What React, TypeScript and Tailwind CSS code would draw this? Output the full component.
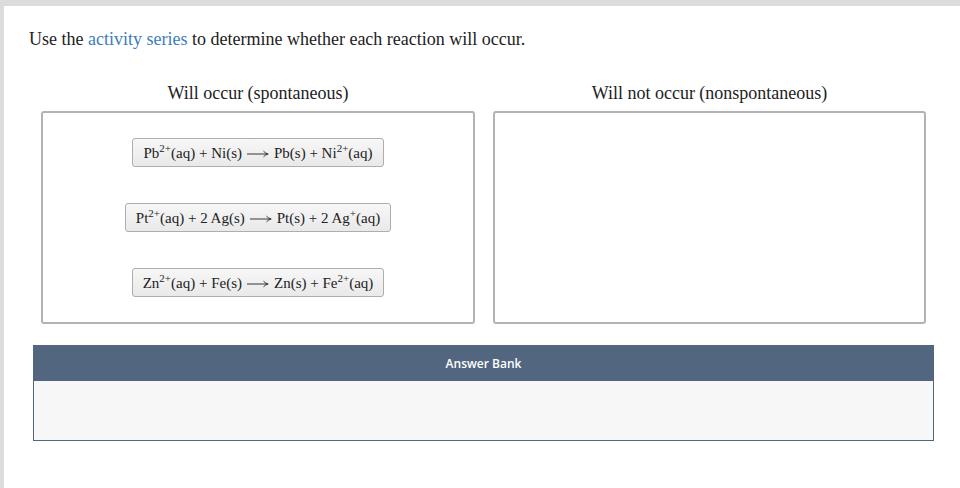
import React from "react";

const serif = "font-['Liberation_Serif','Times_New_Roman',serif]";

function Arrow() {
  return (
    <svg width="22" height="8" viewBox="0 0 22 8" className="mx-[5px] inline-block align-middle">
      <line x1="0" y1="4" x2="20" y2="4" stroke="#222" strokeWidth="0.9" />
      <path d="M16.5 1.2 Q18.5 3.4 21.2 4 Q18.5 4.6 16.5 6.8" fill="none" stroke="#222" strokeWidth="0.9" />
    </svg>
  );
}

function Sup({ children }: { children: React.ReactNode }) {
  return <sup className="top-[-5px] text-[11px] leading-none">{children}</sup>;
}

function Chip({ children }: { children: React.ReactNode }) {
  return (
    <div
      className={`flex h-[29px] items-center whitespace-nowrap rounded-[3px] border border-[#aeaeae] bg-gradient-to-b from-[#f7f7f7] to-[#e9e9e9] px-[10px] pt-[2px] text-[15px] text-[#222] ${serif}`}
    >
      {children}
    </div>
  );
}

const reactions = [
  {
    key: "pb",
    body: (
      <>
        Pb<Sup>2+</Sup>(aq) + Ni(s)
        <Arrow />
        Pb(s) + Ni<Sup>2+</Sup>(aq)
      </>
    ),
  },
  {
    key: "pt",
    body: (
      <>
        Pt<Sup>2+</Sup>(aq) + 2 Ag(s)
        <Arrow />
        Pt(s) + 2 Ag<Sup>+</Sup>(aq)
      </>
    ),
  },
  {
    key: "zn",
    body: (
      <>
        Zn<Sup>2+</Sup>(aq) + Fe(s)
        <Arrow />
        Zn(s) + Fe<Sup>2+</Sup>(aq)
      </>
    ),
  },
];

export default function App() {
  return (
    <div className="h-[488px] w-[960px] overflow-hidden bg-[#dcdcdc] pl-[4px] pt-[6px]">
      <div className="h-full w-full bg-white pl-[25px] pt-[21px]">
        <p className={`text-[18px] leading-[24px] text-[#222] ${serif}`}>
          Use the <span className="text-[#3b7dc1]">activity series</span> to determine whether each reaction will occur.
        </p>

        <div className="mt-[30px] flex gap-[18px] pl-[12px]">
          <div className="w-[434px]">
            <div className={`mb-[6px] text-center text-[18px] leading-[24px] text-[#222] ${serif}`}>
              Will occur (spontaneous)
            </div>
            <div className="flex h-[213px] flex-col items-center gap-[36px] rounded-[3px] border-2 border-[#b3b3b3] pt-[25px]">
              {reactions.map((r) => (
                <Chip key={r.key}>{r.body}</Chip>
              ))}
            </div>
          </div>
          <div className="w-[433px]">
            <div className={`mb-[6px] text-center text-[18px] leading-[24px] text-[#222] ${serif}`}>
              Will not occur (nonspontaneous)
            </div>
            <div className="h-[213px] rounded-[3px] border-2 border-[#b3b3b3]" />
          </div>
        </div>

        <div className="mt-[21px] ml-[4px] w-[901px] border border-[#52667f]">
          <div className="flex h-[35px] items-center justify-center bg-[#52667f] font-['Open_Sans',sans-serif] text-[12px] font-semibold text-white">
            Answer Bank
          </div>
          <div className="h-[59px] bg-[#f7f7f7]" />
        </div>
      </div>
    </div>
  );
}
